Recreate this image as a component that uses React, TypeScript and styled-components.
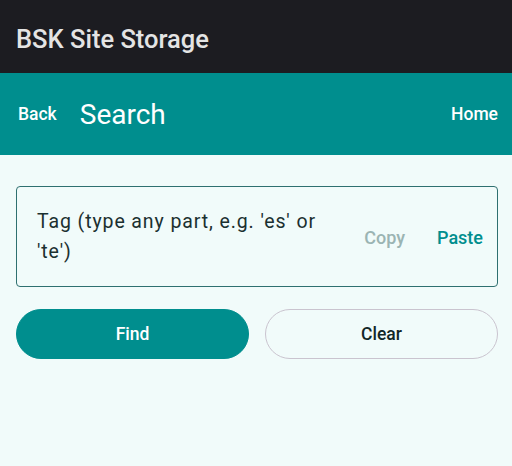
import React from "react";
import styled, { createGlobalStyle } from "styled-components";

const GlobalStyle = createGlobalStyle`
  html, body {
    margin: 0;
    padding: 0;
    background: #f1fbfa;
    font-family: Roboto, "Liberation Sans", sans-serif;
  }
`;

const App = () => {
  return (
    <Page>
      <GlobalStyle />
      <TitleBar>BSK Site Storage</TitleBar>
      <NavBar>
        <NavLink>Back</NavLink>
        <NavTitle>Search</NavTitle>
        <Spacer />
        <NavLink>Home</NavLink>
      </NavBar>
      <Content>
        <Field>
          <Placeholder>Tag (type any part, e.g. 'es' or 'te')</Placeholder>
          <FieldAction muted>Copy</FieldAction>
          <FieldAction>Paste</FieldAction>
        </Field>
        <ButtonRow>
          <PillButton primary>Find</PillButton>
          <PillButton>Clear</PillButton>
        </ButtonRow>
      </Content>
    </Page>
  );
};

export default App;

const Page = styled.div`
  width: 512px;
  min-height: 466px;
  background: #f1fbfa;
`;

const TitleBar = styled.div`
  height: 73px;
  background: #1c1c21;
  color: #e4e4e4;
  font-size: 25.5px;
  font-weight: 500;
  display: flex;
  align-items: center;
  padding: 4px 16px 0;
  box-sizing: border-box;
`;

const NavBar = styled.div`
  height: 82px;
  background: #008e8e;
  display: flex;
  align-items: center;
  padding: 0 14px 0 18px;
  color: #ffffff;
`;

const NavLink = styled.span`
  font-size: 17.5px;
  font-weight: 500;
`;

const NavTitle = styled.span`
  font-size: 28px;
  margin-left: 23px;
`;

const Spacer = styled.div`
  flex: 1;
`;

const Content = styled.div`
  padding: 31px 14px 0 16px;
  display: flex;
  flex-direction: column;
  gap: 22px;
`;

const Field = styled.div`
  height: 101px;
  box-sizing: border-box;
  border: 1px solid #2f7070;
  border-radius: 4px;
  display: flex;
  align-items: center;
  padding: 0 14px 0 20px;
`;

const Placeholder = styled.div`
  flex: 1;
  font-size: 19.5px;
  line-height: 30px;
  color: #1b3030;
  letter-spacing: 0.9px;
  margin-top: 1px;
`;

const FieldAction = styled.span<{ muted?: boolean }>`
  font-size: 18px;
  font-weight: 500;
  color: ${(p) => (p.muted ? "#9bb4b3" : "#008e8e")};
  margin-left: ${(p) => (p.muted ? "14px" : "32px")};
  margin-top: 1px;
  flex: none;
`;

const ButtonRow = styled.div`
  display: grid;
  grid-template-columns: 1fr 1fr;
  gap: 16px;
`;

const PillButton = styled.button<{ primary?: boolean }>`
  height: 50px;
  border-radius: 25px;
  font-family: Roboto, "Liberation Sans", sans-serif;
  font-size: 17.5px;
  font-weight: 500;
  border: 1px solid ${(p) => (p.primary ? "#008e8e" : "#cac4cf")};
  background: ${(p) => (p.primary ? "#008e8e" : "transparent")};
  color: ${(p) => (p.primary ? "#ffffff" : "#122727")};
`;
